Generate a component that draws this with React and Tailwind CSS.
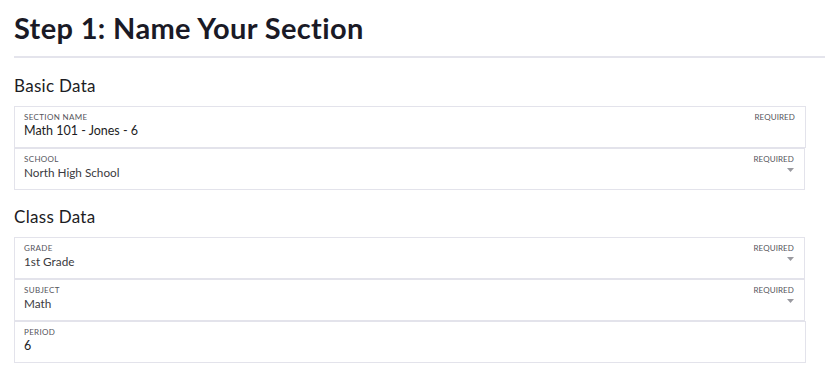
import React from 'react';

/* Step 1 form — section naming */

function Field({ label, value, required, select, big }) {
  return (
    <div
      className={
        'flex justify-between border border-[#e3e3eb] h-[42px] pl-[9px] pr-[10px] pt-[5px] bg-white ' +
        (select ? 'mr-[1px]' : '')
      }
    >
      <div className="flex flex-col">
        <span className="text-[8px] leading-[10px] uppercase text-[#55555c] tracking-[0.35px]">{label}</span>
        <span
          className={
            big
              ? 'text-[12.5px] leading-[16px] mt-px text-[#1c1c24]'
              : 'text-[11.75px] leading-[14px] mt-[2px] text-[#3a3a40]'
          }
        >
          {value}
        </span>
      </div>
      {required && (
        <div className="flex flex-col items-end">
          <span className="text-[8px] leading-[10px] uppercase text-[#55555c] tracking-[0.1px]">Required</span>
          {select && (
            <svg width="7" height="4" viewBox="0 0 7 4" className="mt-[4px]">
              <path d="M0 0 L7 0 L3.5 4 Z" fill="#9a9aa0" />
            </svg>
          )}
        </div>
      )}
    </div>
  );
}

export default function App() {
  return (
    <div className="bg-white w-[825px] h-[376px] overflow-hidden" style={{ fontFamily: 'Lato, "Noto Sans", sans-serif' }}>
      <div className="pl-[14px] pt-[10px]">
        <h1 className="text-[29px] leading-[36px] font-bold text-[#1a1a26] tracking-[0.35px]">Step 1: Name Your Section</h1>
      </div>
      <div className="ml-[14px] mt-[10px] h-[2px] bg-[#e4e4ec]" />

      <div className="pl-[14px] pr-[19px]">
        <h2 className="text-[17px] leading-[22px] text-[#1c1c24] mt-[17px] tracking-[0.3px]">Basic Data</h2>
        <div className="mt-[9px] flex flex-col">
          <Field label="Section Name" value="Math 101 - Jones - 6" required big />
          <Field label="School" value="North High School" required select />
        </div>

        <h2 className="text-[17px] leading-[22px] text-[#1c1c24] mt-[16px] tracking-[0.3px]">Class Data</h2>
        <div className="mt-[9px] flex flex-col">
          <Field label="Grade" value="1st Grade" required select />
          <Field label="Subject" value="Math" required select />
          <Field label="Period" value="6" big />
        </div>
      </div>
    </div>
  );
}
